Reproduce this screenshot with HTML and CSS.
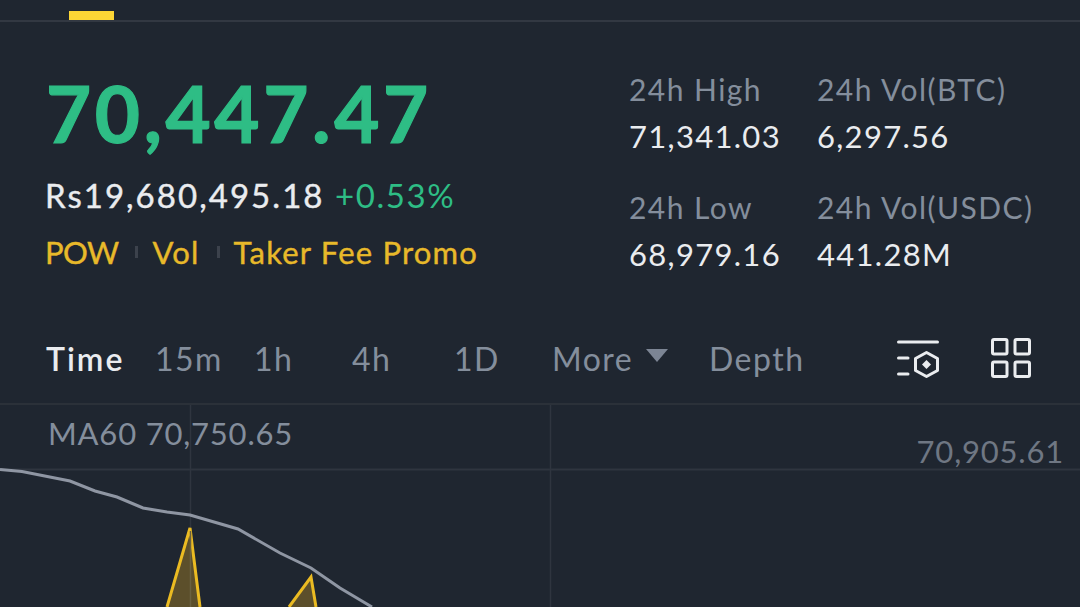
FILE: index.html
```html
<!DOCTYPE html>
<html lang="en">
<head>
    <meta charset="UTF-8">
    <meta name="viewport" content="width=device-width, initial-scale=1.0">
    <title>BTC/USDC</title>
    <link rel="stylesheet" href="styles.css">
</head>
<body>
    <div class="top-tabs">
        <span class="tab-marker"></span>
    </div>

    <div class="summary">
        <div class="price-block">
            <div class="last-price">70,447.47</div>
            <div class="fiat-row">
                <span class="fiat"><span class="fiat-unit">Rs</span>19,680,495.18</span>
                <span class="change">+0.53%</span>
            </div>
            <div class="tags">
                <span class="tag tag-pow">POW</span>
                <span class="tag-sep"></span>
                <span class="tag tag-vol">Vol</span>
                <span class="tag-sep"></span>
                <span class="tag tag-promo">Taker Fee Promo</span>
            </div>
        </div>
        <div class="stats">
            <div class="stat">
                <div class="stat-label">24h High</div>
                <div class="stat-value">71,341.03</div>
            </div>
            <div class="stat">
                <div class="stat-label">24h Vol(BTC)</div>
                <div class="stat-value">6,297.56</div>
            </div>
            <div class="stat">
                <div class="stat-label">24h Low</div>
                <div class="stat-value">68,979.16</div>
            </div>
            <div class="stat">
                <div class="stat-label">24h Vol(USDC)</div>
                <div class="stat-value">441.28M</div>
            </div>
        </div>
    </div>

    <div class="chart-tabs">
        <span class="chart-tab active w-time">Time</span>
        <span class="chart-tab w-15m">15m</span>
        <span class="chart-tab w-1h">1h</span>
        <span class="chart-tab w-4h">4h</span>
        <span class="chart-tab w-1d">1D</span>
        <span class="chart-tab w-more">More<span class="caret"></span></span>
        <span class="chart-tab w-depth">Depth</span>
        <svg class="tool-icon indicator-icon" width="42" height="40" viewBox="0 0 42 40" fill="none" stroke="#eaecef" stroke-width="3" stroke-linecap="round" stroke-linejoin="round">
            <path d="M1.500 4H40.500"/>
            <path d="M1.500 20H11"/>
            <path d="M1.500 36H11"/>
            <path d="M29.500 14.500L40.500 20.500V32.500L29.500 38.500L18.500 32.500V20.500Z"/>
            <path d="M29.500 22L34 26.500L29.500 31L25 26.500Z" fill="#eaecef" stroke="none"/>
        </svg>
        <svg class="tool-icon" width="40" height="40" viewBox="0 0 40 40" fill="none" stroke="#eaecef" stroke-width="3" stroke-linejoin="round">
            <rect x="1.500" y="1.500" width="14.500" height="14.500" rx="1.500"/>
            <rect x="24" y="1.500" width="14.500" height="14.500" rx="1.500"/>
            <rect x="1.500" y="24" width="14.500" height="14.500" rx="1.500"/>
            <rect x="24" y="24" width="14.500" height="14.500" rx="1.500"/>
        </svg>
    </div>

    <div class="chart">
        <svg class="chart-plot" width="1080" height="202" viewBox="0 0 1080 202" fill="none">
            <path d="M0 64.500H1080" stroke="#2f353f" stroke-width="2"/>
            <path d="M190.500 0V202M550.500 0V202" stroke="#2f353f" stroke-width="1.500"/>
            <path d="M167 202L190 123L200 202Z" fill="#5c4f2b"/>
            <path d="M289 202L311 172L316 202Z" fill="#5c4f2b"/>
            <path d="M167 202L190 123L200 202M289 202L311 172L316 202" stroke="#ebbb22" stroke-width="3" stroke-linejoin="miter"/>
            <path d="M190.500 126V202" stroke="#6b6140" stroke-width="1.500"/>
            <path d="M0 64.500L22 66.500L70 76L95 86L117 92L143 103L167 107L190 110L238 124L280 148L311 163L340 183L372 202" stroke="#8f96a3" stroke-width="3"/>
        </svg>
        <div class="ma-label">MA60 70,750.65</div>
        <div class="axis-label">70,905.61</div>
    </div>
</body>
</html>
```

FILE: styles.css
```css
html, body {
    margin: 0;
    padding: 0;
}

body {
    width: 1080px;
    height: 607px;
    overflow: hidden;
    background-color: #1f2630;
    font-family: "Lato", "Open Sans", sans-serif;
    color: #eaecef;
}

.top-tabs {
    height: 20px;
    padding-left: 69px;
    border-bottom: 2px solid #323842;
}

.tab-marker {
    display: block;
    width: 45px;
    height: 9px;
    position: relative;
    top: 11px;
    background-color: #fcd535;
}

.summary {
    display: flex;
    height: 301px;
    padding-left: 46px;
}

.price-block {
    width: 583px;
}

.last-price {
    margin-top: 45px;
    height: 92px;
    line-height: 92px;
    font-size: 78px;
    font-weight: 700;
    letter-spacing: 3.6px;
    color: #2ebd85;
    -webkit-text-stroke: 1.2px #2ebd85;
}

.fiat-row {
    margin-top: 16px;
    margin-left: -1px;
    height: 40px;
    line-height: 40px;
    font-size: 33px;
    white-space: nowrap;
}

.fiat {
    letter-spacing: 2.05px;
    color: #eaecef;
    -webkit-text-stroke: 0.4px #eaecef;
}

.fiat-unit {
    letter-spacing: 2px;
}

.change {
    margin-left: 2px;
    letter-spacing: 1.6px;
    color: #2ebd85;
}

.tags {
    display: flex;
    align-items: center;
    margin-top: 17px;
    margin-left: -1px;
    height: 40px;
    font-size: 31px;
    color: #e8b92a;
    white-space: nowrap;
    -webkit-text-stroke: 0.4px #e8b92a;
}

.tag-pow { letter-spacing: -0.6px; }
.tag-vol { letter-spacing: 1.2px; }
.tag-promo { letter-spacing: 1.2px; }

.tag-sep {
    width: 3px;
    height: 12px;
    margin: 0 14px 0 17px;
    background-color: #3c424c;
}

.stats {
    display: grid;
    grid-template-columns: 188px 220px;
    grid-auto-rows: 118px;
    margin-top: 47px;
}

.stat-label {
    height: 40px;
    line-height: 40px;
    font-size: 30px;
    letter-spacing: 1.45px;
    color: #848e9c;
    white-space: nowrap;
}

.stat-value {
    margin-top: 7px;
    height: 40px;
    line-height: 40px;
    font-size: 31px;
    letter-spacing: 1.3px;
    color: #eaecef;
    white-space: nowrap;
}

.chart-tabs {
    display: flex;
    align-items: center;
    height: 70px;
    padding-left: 46px;
    padding-bottom: 10px;
    border-bottom: 2px solid #2b3139;
}

.chart-tab {
    font-size: 32px;
    letter-spacing: 1.5px;
    color: #848e9c;
    white-space: nowrap;
}

.chart-tab.active {
    font-weight: 600;
    letter-spacing: 2px;
    color: #eaecef;
}

.w-time { width: 109px; }
.w-15m { width: 99px; }
.w-1h { width: 98px; }
.w-4h { width: 102px; }
.w-1d { width: 98px; }
.w-more { width: 157px; display: flex; align-items: center; }
.w-depth { width: 188px; }

.caret {
    width: 0;
    height: 0;
    margin-left: 13px;
    margin-bottom: 6px;
    border-left: 11px solid transparent;
    border-right: 11px solid transparent;
    border-top: 13px solid #7c8594;
}

.tool-icon {
    flex: none;
}

.indicator-icon {
    margin-right: 52px;
}

.chart {
    position: relative;
    height: 202px;
}

.chart-plot {
    display: block;
}

.ma-label {
    position: absolute;
    left: 48px;
    top: 8px;
    font-size: 31px;
    line-height: 40px;
    letter-spacing: 0.8px;
    color: #848e9c;
}

.axis-label {
    position: absolute;
    right: 16px;
    top: 26px;
    font-size: 31px;
    line-height: 40px;
    letter-spacing: 0.8px;
    color: #6f7783;
}
```
